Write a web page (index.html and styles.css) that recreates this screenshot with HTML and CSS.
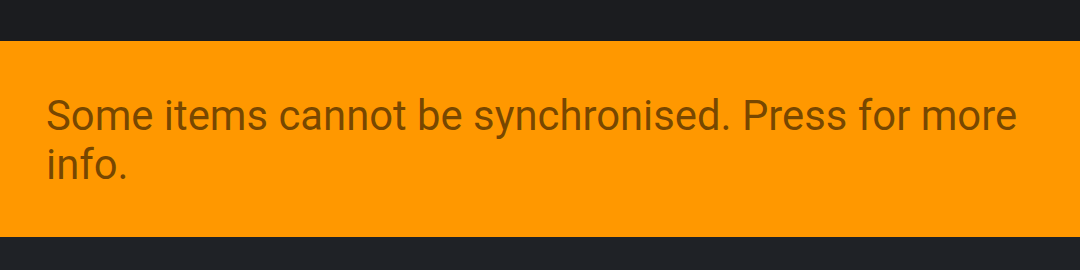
FILE: index.html
```html
<!DOCTYPE html>
<html>
<head>
<meta charset="utf-8">
<link rel="stylesheet" href="styles.css">
</head>
<body>
<div class="top"></div>
<div class="banner">
  <p class="msg">Some items cannot be synchronised. Press for more info.</p>
</div>
<div class="bottom"></div>
</body>
</html>
```
FILE: styles.css
```css
html, body {
  margin: 0;
  padding: 0;
  width: 1080px;
  height: 270px;
  overflow: hidden;
  background: #1f2226;
  font-family: Roboto, "Noto Sans", sans-serif;
}
.top {
  height: 41px;
  background: #1b1c1f;
}
.banner {
  height: 196px;
  background: #ff9800;
  box-sizing: border-box;
  padding: 50px 46px 0 46px;
}
.msg {
  margin: 0;
  font-size: 41.8px;
  line-height: 49px;
  color: rgba(0, 0, 0, 0.54);
}
.bottom {
  height: 33px;
  background: #1f2226;
}
```
